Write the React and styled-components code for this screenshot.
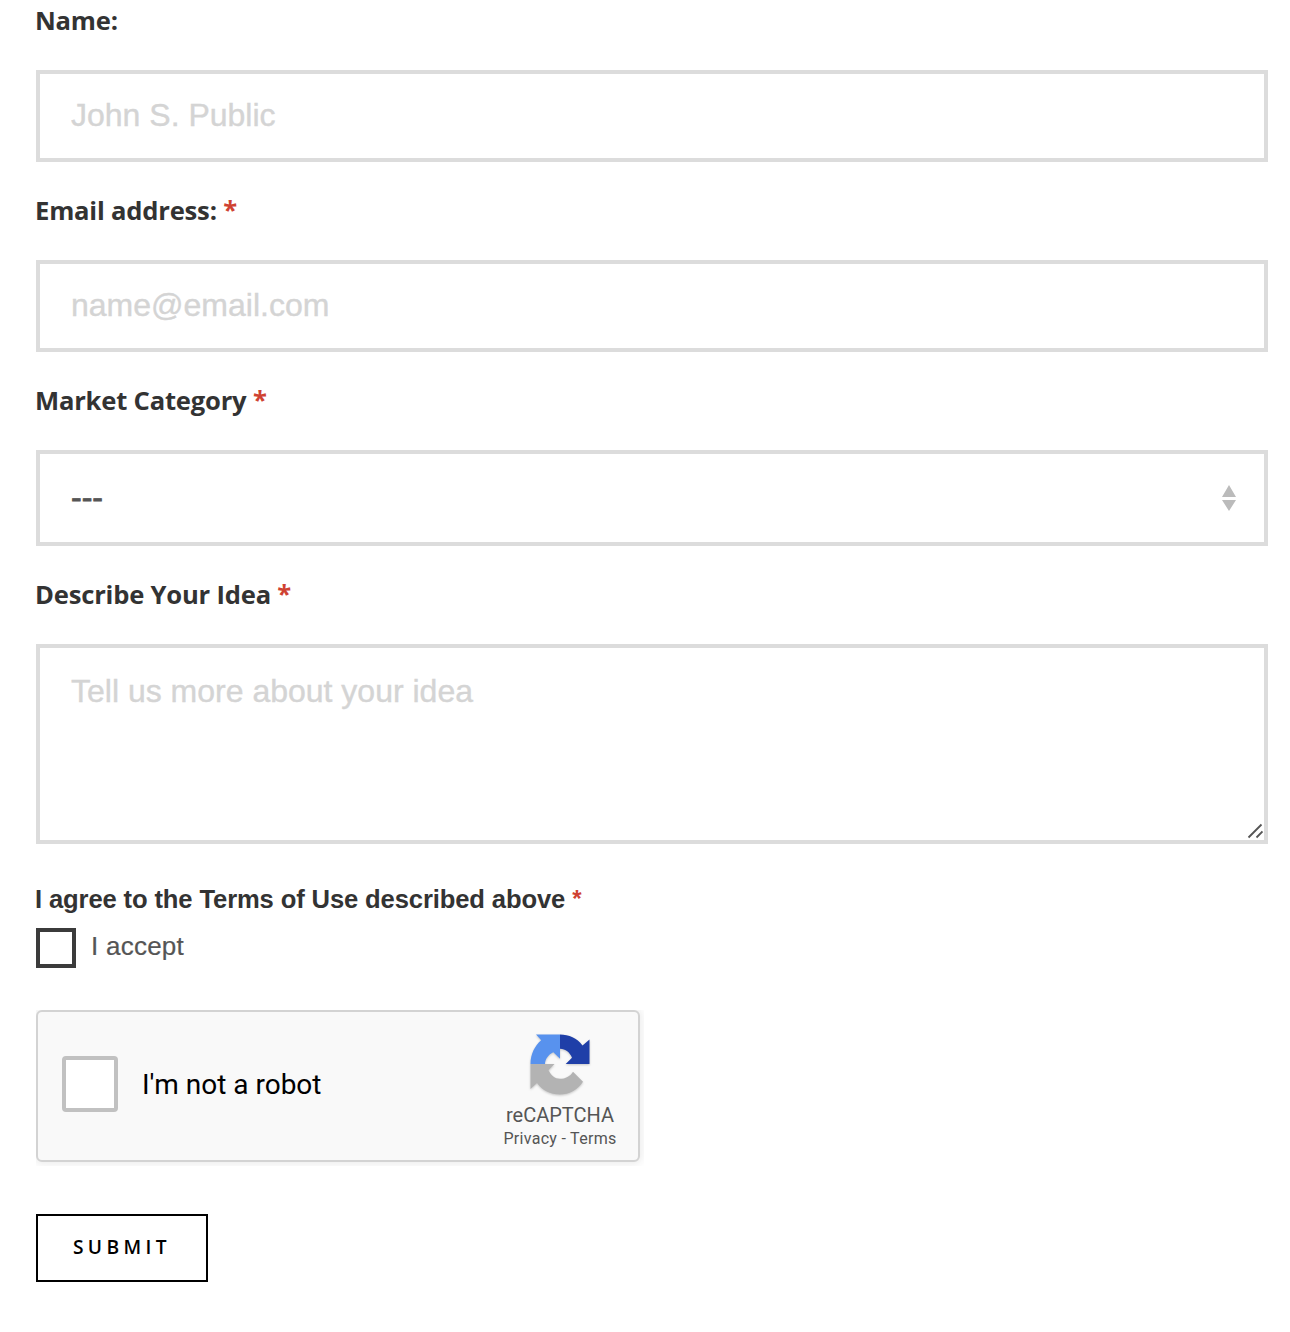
import React, { Component } from "react";
import styled, { createGlobalStyle } from "styled-components";

class App extends Component {
  render() {
    return (
      <React.Fragment>
        <GlobalStyle />
        <Form onSubmit={e => e.preventDefault()}>
          <Field>
            <Label htmlFor='name'>Name:</Label>
            <Input id='name' placeholder='John S. Public' />
          </Field>
          <Field>
            <Label htmlFor='email'>
              Email address: <Required>*</Required>
            </Label>
            <Input id='email' placeholder='name@email.com' />
          </Field>
          <Field>
            <Label htmlFor='category'>
              Market Category <Required>*</Required>
            </Label>
            <SelectBox>
              <Select id='category'>
                <option>---</option>
              </Select>
              <Arrows viewBox='0 0 14 26'>
                <path d='M7 0L14 12H0z M7 26L14 15H0z' fill='#bbb' />
              </Arrows>
            </SelectBox>
          </Field>
          <Field>
            <Label htmlFor='idea'>
              Describe Your Idea <Required>*</Required>
            </Label>
            <TextAreaBox>
              <TextArea id='idea' placeholder='Tell us more about your idea' />
              <Grip viewBox='0 0 16 16'>
                <path d='M1.5 14.5L14.500 1.500M9.500 14.500L15.500 8.500' stroke='#555' strokeWidth='1.8' />
              </Grip>
            </TextAreaBox>
          </Field>
          <TermsTitle>
            I agree to the Terms of Use described above <Required $small>*</Required>
          </TermsTitle>
          <Accept>
            <CheckBox type='checkbox' />
            <span>I accept</span>
          </Accept>
          <Captcha>
            <CaptchaCheck type='checkbox' aria-label="I'm not a robot" />
            <CaptchaText>I'm not a robot</CaptchaText>
            <Brand>
              <CaptchaLogo />
              <BrandName>reCAPTCHA</BrandName>
              <BrandLinks>Privacy - Terms</BrandLinks>
            </Brand>
          </Captcha>
          <Submit type='submit'>SUBMIT</Submit>
        </Form>
      </React.Fragment>
    );
  }
}

const CaptchaLogo = () => (
  <Logo viewBox='0 0 60 62'>
    <path
      fill='#1f3fa8'
      d='M30 .5C39 .5 47 4 52.500 11.500L59.500 5.500V30H35.700L42 23.700C40 18.500 35.500 14.700 30 14.700z'
    />
    <path
      fill='#5892ee'
      d='M6 .5H30V24.800L23.300 18.200C18.500 20.500 15 25 15 30H.5C.5 20 5 11.500 11.200 6.300z'
    />
    <path
      fill='#b3b3b3'
      d='M.5 30H24.500L18.500 36.300C21 41.500 25 44.800 30 44.800C35.500 44.800 40 42.500 43 37.700L53 47.700C47.500 56 39 60.500 30 60.500C20 60.500 12.500 56.500 7 49L.5 55z'
    />
  </Logo>
);

export default App;

const GlobalStyle = createGlobalStyle`
  * {
    box-sizing: border-box;
  }
  body {
    margin: 0;
    background: #fff;
    font-family: "Liberation Sans", Arial, sans-serif;
    color: #555;
  }
`;

const Form = styled.form`
  display: flex;
  flex-direction: column;
  align-items: flex-start;
  width: 1268px;
  height: 1332px;
  padding: 3px 0 0 36px;
`;

const Field = styled.div`
  width: 100%;
  margin-bottom: 31px;
`;

const Label = styled.label`
  display: block;
  height: 36px;
  margin-bottom: 31px;
  margin-left: -1px;
  font: 700 25.6px/36px "Open Sans", sans-serif;
  letter-spacing: -0.2px;
  color: #333;
`;

const Required = styled.span`
  font-size: ${props => (props.$small ? "24px" : "inherit")};
  line-height: 1;
  vertical-align: 1px;
  color: #cf4232;
`;

const Input = styled.input`
  display: block;
  width: 100%;
  height: 92px;
  padding: 0 31px 2px;
  border: 4px solid #dcdcdc;
  border-radius: 0;
  outline: none;
  background: #fff;
  font: 32px "Liberation Sans", Arial, sans-serif;
  color: #555;
  &::placeholder {
    color: #d4d4d4;
    opacity: 1;
    -webkit-text-stroke: 0.4px #d4d4d4;
  }
`;

const SelectBox = styled.div`
  position: relative;
`;

const Select = styled(Input).attrs({ as: "select" })`
  height: 96px;
  padding: 0 31px 2px;
  appearance: none;
  -webkit-text-stroke: 0.8px #555;
`;

const Arrows = styled.svg`
  position: absolute;
  top: 35px;
  right: 32px;
  width: 14px;
  height: 26px;
  pointer-events: none;
`;

const TextAreaBox = styled.div`
  position: relative;
`;

const TextArea = styled(Input).attrs({ as: "textarea" })`
  height: 200px;
  padding: 25px 31px;
  line-height: 37px;
  resize: none;
`;

const Grip = styled.svg`
  position: absolute;
  right: 5px;
  bottom: 5px;
  width: 16px;
  height: 16px;
  pointer-events: none;
`;

const TermsTitle = styled.div`
  margin: 9px 0 0 -1px;
  height: 44px;
  font-size: 25.6px;
  font-weight: 700;
  line-height: 30px;
  letter-spacing: -0.13px;
  color: #333;
`;

const Accept = styled.label`
  display: flex;
  gap: 15px;
  height: 40px;
  font-size: 26px;
  line-height: 36px;
  letter-spacing: 0.25px;
  -webkit-text-stroke: 0.2px #555;
`;

const CheckBox = styled.input`
  appearance: none;
  width: 40px;
  height: 40px;
  margin: 0;
  border: 4px solid #3b3b3b;
`;

/* the shadow only shows to the right and below */
const Captcha = styled.div`
  display: flex;
  width: 604px;
  height: 152px;
  margin: 42px 0 52px;
  padding-left: 24px;
  border: 2px solid #d3d3d3;
  border-radius: 6px;
  background: #f9f9f9;
  box-shadow: 0 0 8px 2px rgba(0, 0, 0, 0.08);
  clip-path: inset(0 -4px -4px 0);
  font-family: Roboto, sans-serif;
`;

const CaptchaCheck = styled(CheckBox)`
  width: 56px;
  height: 56px;
  margin-top: 44px;
  border-color: #c1c1c1;
  border-radius: 4px;
  background: #fff;
`;

const CaptchaText = styled.div`
  flex: 1;
  padding-left: 24px;
  font-size: 28px;
  line-height: 146px;
  color: #000;
`;

const Brand = styled.div`
  display: flex;
  flex-direction: column;
  align-items: center;
  width: 156px;
  padding-top: 22px;
  white-space: nowrap;
`;

const Logo = styled.svg`
  width: 60px;
  height: 62px;
  filter: drop-shadow(0 1px 1px rgba(0, 0, 0, 0.2));
`;

const BrandName = styled.div`
  margin-top: 7px;
  font-size: 20px;
  line-height: 24px;
`;

const BrandLinks = styled.div`
  font-size: 16px;
  line-height: 24px;
  letter-spacing: 0.3px;
`;

const Submit = styled.button`
  width: 172px;
  height: 68px;
  padding: 0 0 4px;
  border: 2px solid #000;
  background: #fff;
  font: 600 19.2px "Open Sans", sans-serif;
  letter-spacing: 4.4px;
  color: #000;
`;
